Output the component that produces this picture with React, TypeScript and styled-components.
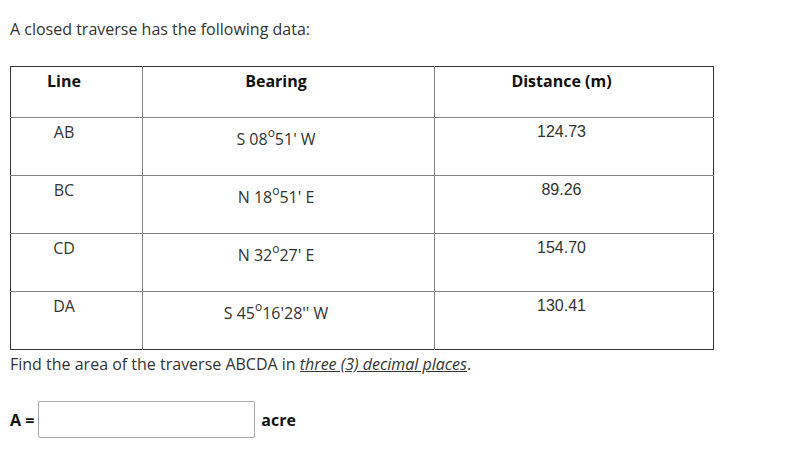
import React from "react";
import styled, { createGlobalStyle } from "styled-components";

const GlobalStyle = createGlobalStyle`
  html, body {
    margin: 0;
    padding: 0;
    background: #fff;
  }
  body {
    font-family: "Open Sans", "Liberation Sans", sans-serif;
    font-size: 16px;
    color: #333;
  }
`;

const Page = styled.div`
  padding: 17px 10px 0 10px;
  width: 792px;
  height: 456px;
  box-sizing: border-box;
`;

const Para = styled.p`
  margin: 0;
  line-height: 24px;
`;

const Intro = styled(Para)`
  margin-bottom: 25px;
`;

const Question = styled(Para)`
  margin-top: 2px;
`;

const Emph = styled.em`
  text-decoration: underline;
`;

const DataTable = styled.table`
  border-collapse: collapse;
  table-layout: fixed;
  width: 703px;
  border: 1px solid #333;
`;

const HeadCell = styled.th<{ $w: number }>`
  width: ${(p) => p.$w}px;
  height: 51px;
  box-sizing: border-box;
  padding: 2px 25px 0 0;
  vertical-align: top;
  text-align: center;
  font-weight: 700;
  color: #111;
  line-height: 24px;
  border: 1px solid #808080;
  border-top: none;
  &:last-child {
    border-right: none;
  }
  &:first-child {
    border-left: none;
  }
`;

const Cell = styled.td<{ $num?: boolean }>`
  height: 58px;
  box-sizing: border-box;
  padding: 2px 25px 0 0;
  vertical-align: top;
  text-align: center;
  line-height: 24px;
  border: 1px solid #808080;
  font-family: ${(p) =>
    p.$num ? `"Liberation Sans", Arial, sans-serif` : `"Open Sans", sans-serif`};
  &:last-child {
    border-right: none;
  }
  &:first-child {
    border-left: none;
  }
`;

const Row = styled.tr`
  &:last-child td {
    border-bottom: none;
  }
`;

const Deg = styled.sup`
  font-size: 12px;
  vertical-align: 8px;
  line-height: 26px;
`;

const AnswerRow = styled.div`
  display: flex;
  align-items: center;
  gap: 4px;
  margin-top: 25px;
`;

const Label = styled.span`
  font-weight: 700;
  color: #111;
  line-height: 24px;
`;

const AnswerInput = styled.input`
  width: 217px;
  height: 37px;
  box-sizing: border-box;
  border: 1px solid #a8a8a8;
  border-radius: 2px;
  margin-right: 2px;
  font: inherit;
  padding: 0 6px;
`;

type Leg = { line: string; deg: string; rest: string; pre: string; dist: string };

const legs: Leg[] = [
  { line: "AB", pre: "S 08", deg: "o", rest: "51' W", dist: "124.73" },
  { line: "BC", pre: "N 18", deg: "o", rest: "51' E", dist: "89.26" },
  { line: "CD", pre: "N 32", deg: "o", rest: "27' E", dist: "154.70" },
  { line: "DA", pre: "S 45", deg: "o", rest: "16'28'' W", dist: "130.41" },
];

export default function App() {
  return (
    <>
      <GlobalStyle />
      <Page>
        <Intro>A closed traverse has the following data:</Intro>
        <DataTable>
          <thead>
            <tr>
              <HeadCell $w={132}>Line</HeadCell>
              <HeadCell $w={292}>Bearing</HeadCell>
              <HeadCell $w={279}>Distance (m)</HeadCell>
            </tr>
          </thead>
          <tbody>
            {legs.map((l) => (
              <Row key={l.line}>
                <Cell>{l.line}</Cell>
                <Cell>
                  {l.pre}
                  <Deg>{l.deg}</Deg>
                  {l.rest}
                </Cell>
                <Cell $num>{l.dist}</Cell>
              </Row>
            ))}
          </tbody>
        </DataTable>
        <Question>
          Find the area of the traverse ABCDA in <Emph>three (3) decimal places</Emph>.
        </Question>
        <AnswerRow>
          <Label>A =</Label>
          <AnswerInput type="text" />
          <Label>acre</Label>
        </AnswerRow>
      </Page>
    </>
  );
}
